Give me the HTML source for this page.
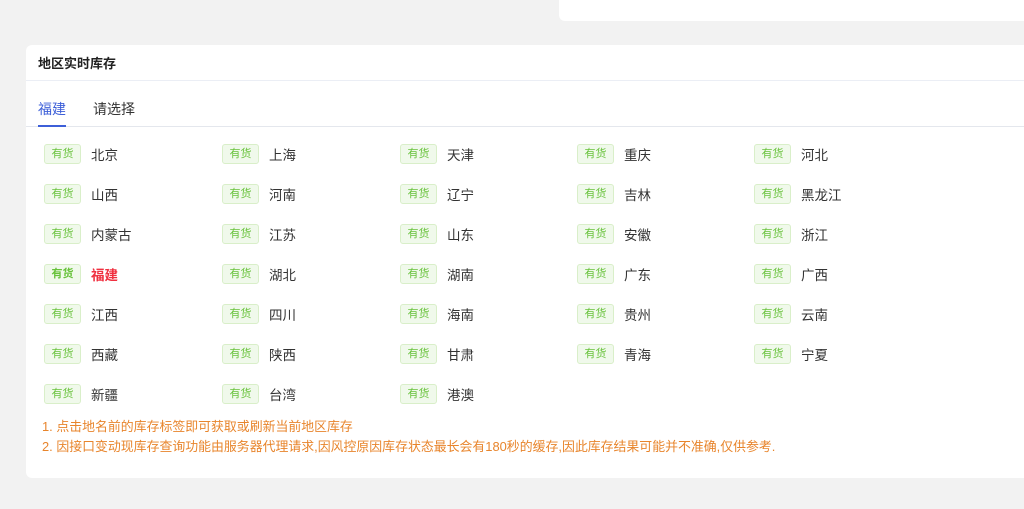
<!DOCTYPE html>
<html><head><meta charset="utf-8"><style>
*{margin:0;padding:0;box-sizing:border-box}
body{width:1024px;height:509px;background:#f2f2f2;font-family:"Liberation Sans","Noto Sans CJK SC",sans-serif;position:relative;overflow:hidden;color:#333}
.top{position:absolute;left:559px;top:-6px;width:480px;height:27px;background:#fff;border-radius:6px}
.card{position:absolute;left:26px;top:45px;width:1010px;height:433px;background:#fff;border-radius:6px}
.hd{height:36px;border-bottom:1px solid #ebeef5;padding-left:12px;font-size:13px;font-weight:bold;line-height:37px;color:#222}
.tabs{position:absolute;top:36px;left:0;right:0;height:46px;border-bottom:1px solid #e4e7ed}
.tab{position:absolute;top:20px;font-size:14px;line-height:16px}
.tab.a{left:12px;color:#3d5fd8}
.tab.a:after{content:"";position:absolute;left:0;right:0;top:24px;height:2px;background:#3d5fd8}
.tab.b{left:67px;color:#333}
.it{position:absolute;height:20px;width:170px;display:flex;align-items:center;white-space:nowrap}
.tag{flex:0 0 37px;width:37px;height:20px;border:1px solid #d9efc9;background:#f0f9eb;color:#67c23a;font-size:11px;text-align:center;line-height:18px;border-radius:3px}
.nm{margin-left:10px;font-size:13.5px;color:#333;white-space:nowrap}
.nm.r{color:#f03040;font-weight:bold}
.note{position:absolute;font-size:12.9px;color:#e8852c;white-space:nowrap}
</style></head><body>
<div class="top"></div>
<div class="card">
<div class="hd">地区实时库存</div>
<div class="tabs"><div class="tab a">福建</div><div class="tab b">请选择</div></div>
</div>
<div class="note" style="left:42px;top:416px">1. 点击地名前的库存标签即可获取或刷新当前地区库存</div>
<div class="note" style="left:42px;top:436px">2. 因接口变动现库存查询功能由服务器代理请求,因风控原因库存状态最长会有180秒的缓存,因此库存结果可能并不准确,仅供参考.</div>
<div class="it" style="left:44px;top:144px"><div class="tag">有货</div><span class="nm">北京</span></div>
<div class="it" style="left:222px;top:144px"><div class="tag">有货</div><span class="nm">上海</span></div>
<div class="it" style="left:400px;top:144px"><div class="tag">有货</div><span class="nm">天津</span></div>
<div class="it" style="left:577px;top:144px"><div class="tag">有货</div><span class="nm">重庆</span></div>
<div class="it" style="left:754px;top:144px"><div class="tag">有货</div><span class="nm">河北</span></div>
<div class="it" style="left:44px;top:184px"><div class="tag">有货</div><span class="nm">山西</span></div>
<div class="it" style="left:222px;top:184px"><div class="tag">有货</div><span class="nm">河南</span></div>
<div class="it" style="left:400px;top:184px"><div class="tag">有货</div><span class="nm">辽宁</span></div>
<div class="it" style="left:577px;top:184px"><div class="tag">有货</div><span class="nm">吉林</span></div>
<div class="it" style="left:754px;top:184px"><div class="tag">有货</div><span class="nm">黑龙江</span></div>
<div class="it" style="left:44px;top:224px"><div class="tag">有货</div><span class="nm">内蒙古</span></div>
<div class="it" style="left:222px;top:224px"><div class="tag">有货</div><span class="nm">江苏</span></div>
<div class="it" style="left:400px;top:224px"><div class="tag">有货</div><span class="nm">山东</span></div>
<div class="it" style="left:577px;top:224px"><div class="tag">有货</div><span class="nm">安徽</span></div>
<div class="it" style="left:754px;top:224px"><div class="tag">有货</div><span class="nm">浙江</span></div>
<div class="it" style="left:44px;top:264px"><div class="tag" style="font-weight:bold">有货</div><span class="nm r">福建</span></div>
<div class="it" style="left:222px;top:264px"><div class="tag">有货</div><span class="nm">湖北</span></div>
<div class="it" style="left:400px;top:264px"><div class="tag">有货</div><span class="nm">湖南</span></div>
<div class="it" style="left:577px;top:264px"><div class="tag">有货</div><span class="nm">广东</span></div>
<div class="it" style="left:754px;top:264px"><div class="tag">有货</div><span class="nm">广西</span></div>
<div class="it" style="left:44px;top:304px"><div class="tag">有货</div><span class="nm">江西</span></div>
<div class="it" style="left:222px;top:304px"><div class="tag">有货</div><span class="nm">四川</span></div>
<div class="it" style="left:400px;top:304px"><div class="tag">有货</div><span class="nm">海南</span></div>
<div class="it" style="left:577px;top:304px"><div class="tag">有货</div><span class="nm">贵州</span></div>
<div class="it" style="left:754px;top:304px"><div class="tag">有货</div><span class="nm">云南</span></div>
<div class="it" style="left:44px;top:344px"><div class="tag">有货</div><span class="nm">西藏</span></div>
<div class="it" style="left:222px;top:344px"><div class="tag">有货</div><span class="nm">陕西</span></div>
<div class="it" style="left:400px;top:344px"><div class="tag">有货</div><span class="nm">甘肃</span></div>
<div class="it" style="left:577px;top:344px"><div class="tag">有货</div><span class="nm">青海</span></div>
<div class="it" style="left:754px;top:344px"><div class="tag">有货</div><span class="nm">宁夏</span></div>
<div class="it" style="left:44px;top:384px"><div class="tag">有货</div><span class="nm">新疆</span></div>
<div class="it" style="left:222px;top:384px"><div class="tag">有货</div><span class="nm">台湾</span></div>
<div class="it" style="left:400px;top:384px"><div class="tag">有货</div><span class="nm">港澳</span></div>
</body></html>
